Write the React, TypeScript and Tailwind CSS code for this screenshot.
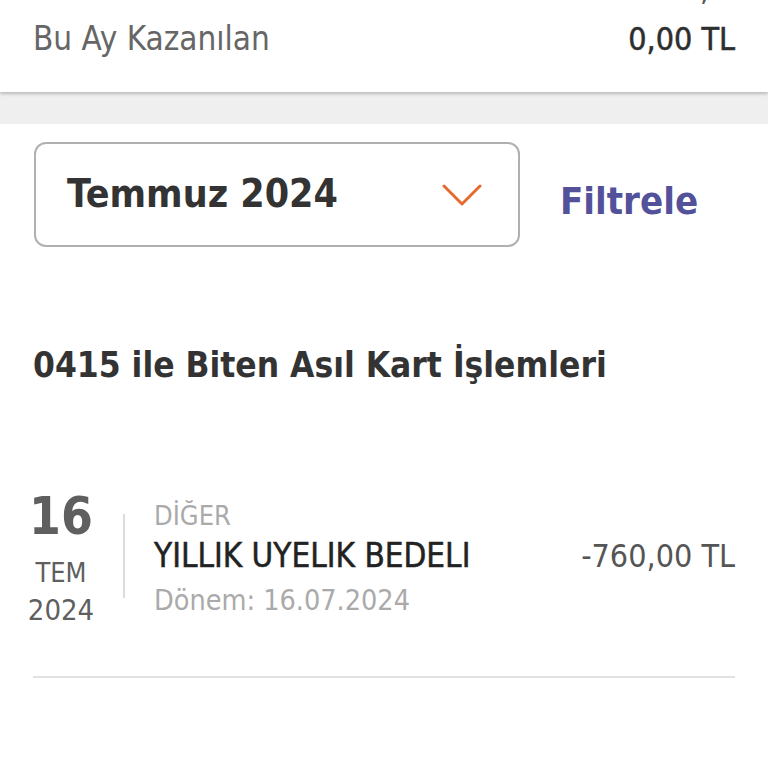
// Kart hareketleri ekranı — özet, ay seçimi, işlem listesi.

const font = { fontFamily: '"DejaVu Sans Condensed", "DejaVu Sans", sans-serif' };

function Chevron() {
  return (
    <svg width="40" height="24" viewBox="0 0 40 24" fill="none">
      <path d="M2 3 L20 21 L38 3" stroke="#E8692E" strokeWidth="3" strokeLinecap="round" strokeLinejoin="round" />
    </svg>
  );
}

export default function App() {
  return (
    <div className="relative w-[768px] h-[768px] bg-white overflow-hidden" style={font}>
      {/* özet */}
      <div className="relative z-10 bg-white h-[92px] px-[33px] pt-[19px] flex justify-between shadow-[0_2px_3px_rgba(0,0,0,0.22)]">
        <span className="absolute left-[700px] -top-[31px] text-[32px] leading-[40px] text-[#555]">,</span>
        <span className="text-[33px] leading-[40px] text-[#666]">Bu Ay Kazanılan</span>
        <span className="text-[32px] leading-[40px] text-[#2e2e2e] [-webkit-text-stroke:0.5px_#2e2e2e]">0,00 TL</span>
      </div>
      <div className="h-[32px] bg-[#efefef]" />

      {/* ay seçimi */}
      <div className="flex items-center px-[34px] pt-[18px]">
        <div className="w-[486px] h-[105px] border-2 border-[#b0b0b0] rounded-[12px] flex items-center justify-between pl-[31px] pr-[36px]">
          <span className="text-[39px] font-bold text-[#333]">Temmuz 2024</span>
          <Chevron />
        </div>
        <span className="ml-[40px] mt-[14px] text-[38px] font-bold text-[#525199]">Filtrele</span>
      </div>

      <div className="px-[33px] pt-[96px] text-[35px] leading-[44px] font-bold text-[#333]">
        0415 ile Biten Asıl Kart İşlemleri
      </div>

      {/* işlem */}
      <div className="mx-[33px] mt-[106px] border-b-2 border-[#e2e2e2] pb-[48px] flex">
        <div className="w-[66px] -ml-[5px] flex flex-col items-center text-[#5f5f5f]">
          <span className="-mt-[4px] text-[51px] leading-[56px] font-bold">16</span>
          <span className="mt-[10px] text-[27px] leading-[36px]">TEM</span>
          <span className="mt-[1px] text-[29px] leading-[36px]">2024</span>
        </div>
        <div className="w-[2px] h-[84px] mt-[21px] ml-[29px] mr-[29px] bg-[#dcdcdc]" />
        <div className="flex-1 flex flex-col pt-[5px]">
          <span className="text-[27px] leading-[36px] text-[#aaa]">DİĞER</span>
          <div className="mt-[2px] flex justify-between">
            <span className="text-[33px] leading-[40px] text-[#222] [-webkit-text-stroke:0.5px_#222]">YILLIK UYELIK BEDELI</span>
            <span className="text-[32px] leading-[40px] text-[#555]">-760,00 TL</span>
          </div>
          <span className="mt-[7px] text-[28.5px] leading-[36px] text-[#aaa]">Dönem: 16.07.2024</span>
        </div>
      </div>
    </div>
  );
}
